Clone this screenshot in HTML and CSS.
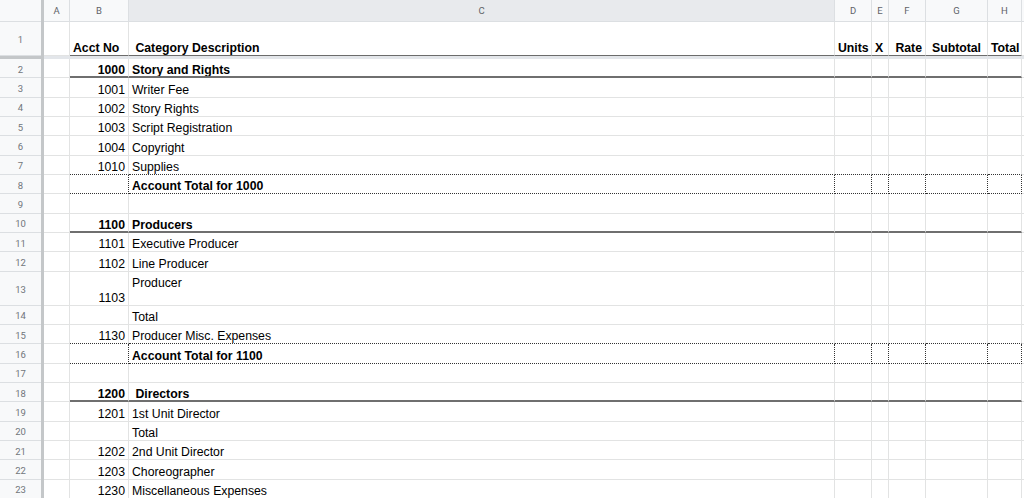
FILE: index.html
```html
<!DOCTYPE html>
<html>
<head>
    <title>Budget - Sheet1</title>
    <link rel="stylesheet" href="styles.css">
</head>
<body>
    <table class="sheet">
        <colgroup>
            <col class="w-rn">
            <col class="w-fz">
            <col class="w-a">
            <col class="w-b">
            <col class="w-c">
            <col class="w-d">
            <col class="w-e">
            <col class="w-f">
            <col class="w-g">
            <col class="w-h">
            <col class="w-rest">
        </colgroup>
        <thead>
            <tr class="col-head">
                <th class="corner"></th>
                <th class="fz"></th>
                <th>A</th>
                <th>B</th>
                <th class="sel">C</th>
                <th>D</th>
                <th>E</th>
                <th>F</th>
                <th>G</th>
                <th>H</th>
                <th class="rest"></th>
            </tr>
        </thead>
        <tbody>
            <tr class="title">
                <th class="rn">1</th><td class="fz"></td><td></td>
                <td class="b">Acct No</td>
                <td class="b">&nbsp;Category Description</td>
                <td class="b">Units</td>
                <td class="b">X</td>
                <td class="b right">Rate</td>
                <td class="b center">Subtotal</td>
                <td class="b right">Total</td>
                <td class="rest"></td>
            </tr>
            <tr class="freeze">
                <th class="rn"></th><td class="fz"></td><td class="band-a"></td>
                <td class="band" colspan="7"></td><td class="rest"></td>
            </tr>

            <tr class="sec">
                <th class="rn">2</th><td class="fz"></td><td></td>
                <td class="num b">1000</td><td class="b">Story and Rights</td>
                <td></td><td></td><td></td><td></td><td></td><td class="rest"></td>
            </tr>
            <tr>
                <th class="rn">3</th><td class="fz"></td><td></td>
                <td class="num">1001</td><td>Writer Fee</td>
                <td></td><td></td><td></td><td></td><td></td><td class="rest"></td>
            </tr>
            <tr>
                <th class="rn">4</th><td class="fz"></td><td></td>
                <td class="num">1002</td><td>Story Rights</td>
                <td></td><td></td><td></td><td></td><td></td><td class="rest"></td>
            </tr>
            <tr>
                <th class="rn">5</th><td class="fz"></td><td></td>
                <td class="num">1003</td><td>Script Registration</td>
                <td></td><td></td><td></td><td></td><td></td><td class="rest"></td>
            </tr>
            <tr>
                <th class="rn">6</th><td class="fz"></td><td></td>
                <td class="num">1004</td><td>Copyright</td>
                <td></td><td></td><td></td><td></td><td></td><td class="rest"></td>
            </tr>
            <tr class="pre-tot">
                <th class="rn">7</th><td class="fz"></td><td></td>
                <td class="num">1010</td><td>Supplies</td>
                <td></td><td></td><td></td><td></td><td></td><td class="rest"></td>
            </tr>
            <tr class="tot">
                <th class="rn">8</th><td class="fz"></td><td></td>
                <td></td><td class="b">Account Total for 1000</td>
                <td></td><td></td><td></td><td></td><td></td><td class="rest"></td>
            </tr>
            <tr>
                <th class="rn">9</th><td class="fz"></td><td></td>
                <td></td><td></td>
                <td></td><td></td><td></td><td></td><td></td><td class="rest"></td>
            </tr>

            <tr class="sec">
                <th class="rn">10</th><td class="fz"></td><td></td>
                <td class="num b">1100</td><td class="b">Producers</td>
                <td></td><td></td><td></td><td></td><td></td><td class="rest"></td>
            </tr>
            <tr>
                <th class="rn">11</th><td class="fz"></td><td></td>
                <td class="num">1101</td><td>Executive Producer</td>
                <td></td><td></td><td></td><td></td><td></td><td class="rest"></td>
            </tr>
            <tr>
                <th class="rn">12</th><td class="fz"></td><td></td>
                <td class="num">1102</td><td>Line Producer</td>
                <td></td><td></td><td></td><td></td><td></td><td class="rest"></td>
            </tr>
            <tr class="tall">
                <th class="rn">13</th><td class="fz"></td><td></td>
                <td class="num">1103</td><td class="top">Producer</td>
                <td></td><td></td><td></td><td></td><td></td><td class="rest"></td>
            </tr>
            <tr>
                <th class="rn">14</th><td class="fz"></td><td></td>
                <td></td><td>Total</td>
                <td></td><td></td><td></td><td></td><td></td><td class="rest"></td>
            </tr>
            <tr class="pre-tot">
                <th class="rn">15</th><td class="fz"></td><td></td>
                <td class="num">1130</td><td>Producer Misc. Expenses</td>
                <td></td><td></td><td></td><td></td><td></td><td class="rest"></td>
            </tr>
            <tr class="tot">
                <th class="rn">16</th><td class="fz"></td><td></td>
                <td></td><td class="b">Account Total for 1100</td>
                <td></td><td></td><td></td><td></td><td></td><td class="rest"></td>
            </tr>
            <tr>
                <th class="rn">17</th><td class="fz"></td><td></td>
                <td></td><td></td>
                <td></td><td></td><td></td><td></td><td></td><td class="rest"></td>
            </tr>

            <tr class="sec">
                <th class="rn">18</th><td class="fz"></td><td></td>
                <td class="num b">1200</td><td class="b">&nbsp;Directors</td>
                <td></td><td></td><td></td><td></td><td></td><td class="rest"></td>
            </tr>
            <tr>
                <th class="rn">19</th><td class="fz"></td><td></td>
                <td class="num">1201</td><td>1st Unit Director</td>
                <td></td><td></td><td></td><td></td><td></td><td class="rest"></td>
            </tr>
            <tr>
                <th class="rn">20</th><td class="fz"></td><td></td>
                <td></td><td>Total</td>
                <td></td><td></td><td></td><td></td><td></td><td class="rest"></td>
            </tr>
            <tr>
                <th class="rn">21</th><td class="fz"></td><td></td>
                <td class="num">1202</td><td>2nd Unit Director</td>
                <td></td><td></td><td></td><td></td><td></td><td class="rest"></td>
            </tr>
            <tr>
                <th class="rn">22</th><td class="fz"></td><td></td>
                <td class="num">1203</td><td>Choreographer</td>
                <td></td><td></td><td></td><td></td><td></td><td class="rest"></td>
            </tr>
            <tr>
                <th class="rn">23</th><td class="fz"></td><td></td>
                <td class="num">1230</td><td>Miscellaneous Expenses</td>
                <td></td><td></td><td></td><td></td><td></td><td class="rest"></td>
            </tr>
        </tbody>
    </table>
</body>
</html>
```

FILE: styles.css
```css
body {
    margin: 0;
    padding: 0;
    background: #fff;
    overflow: hidden;
    font-family: "Liberation Sans", Arial, sans-serif;
}
.sheet {
    table-layout: fixed;
    border-collapse: separate;
    border-spacing: 0;
    width: 1024px;
    font-size: 12.27px;
    line-height: 13px;
    color: #000;
}
.w-rn { width: 41px; }
.w-fz { width: 3px; }
.w-a { width: 26px; }
.w-b { width: 59px; }
.w-c { width: 706px; }
.w-d { width: 37px; }
.w-e { width: 17px; }
.w-f { width: 37px; }
.w-g { width: 62px; }
.w-h { width: 34px; }
.w-rest { width: 2px; }

td, th {
    box-sizing: border-box;
    padding: 0 3px 0;
    border-right: 1px solid #e2e3e3;
    border-bottom: 1px solid #e2e3e3;
    vertical-align: bottom;
    white-space: nowrap;
    overflow: hidden;
    text-align: left;
    font-weight: normal;
}
tbody tr { height: 19.33px; }
tbody tr.title { height: 34px; }
tbody tr.tall { height: 34px; }
tbody tr.freeze { height: 3px; }

/* headers */
.col-head { height: 22px; }
.col-head th {
    background: #f8f9fa;
    color: #5f6368;
    font-family: Roboto, "Liberation Sans", sans-serif;
    font-size: 9.5px;
    text-align: center;
    vertical-align: middle;
    padding: 0;
    border-right: 1px solid #dcdfe2;
    border-bottom: 1px solid #dcdfe2;
}
.col-head th.sel { background: #e8eaed; }
.col-head th.corner { border-right: none; }
th.rn {
    background: #f8f9fa;
    color: #70757a;
    font-family: Roboto, "Liberation Sans", sans-serif;
    font-size: 9.5px;
    line-height: 15px;
    text-align: center;
    vertical-align: middle;
    padding: 2px 0 0;
    border-right: none;
    border-bottom: 1px solid #dcdfe2;
}
.fz, .col-head th.fz {
    background: #c4c7c9;
    padding: 0;
    border: none;
}
th.rest, td.rest {
    padding: 0;
    border-right: none;
}

/* frozen row band */
.freeze th.rn { background: #c4c7c9; border-bottom: none; padding: 0; }
.freeze td { padding: 0; border: none; }
.freeze td.band-a { background: #e3e6ea; }
.freeze td.band { background: #e3e6ea; }
.freeze td.rest { background: #e3e6ea; }

.title td:nth-child(n+4):not(.rest) { border-bottom: 1px solid #6b6b6b; }

.b { font-weight: bold; }
.num { text-align: right; }
.right { text-align: right; }
.center { text-align: center; }
.top { vertical-align: top; padding-top: 5px; }

/* section heading rows */
.sec td { line-height: 12px; }
.sec td:nth-child(n+4):not(.rest) { border-bottom: 2px solid #6f6f6f; }

/* account total boxes */
.pre-tot td:nth-child(n+4):not(.rest),
.tot td:nth-child(n+4):not(.rest) {
    border-bottom: 1px dotted #333;
}
.tot td:nth-child(n+4):not(.rest) { border-right: 1px dotted #333; }
```
